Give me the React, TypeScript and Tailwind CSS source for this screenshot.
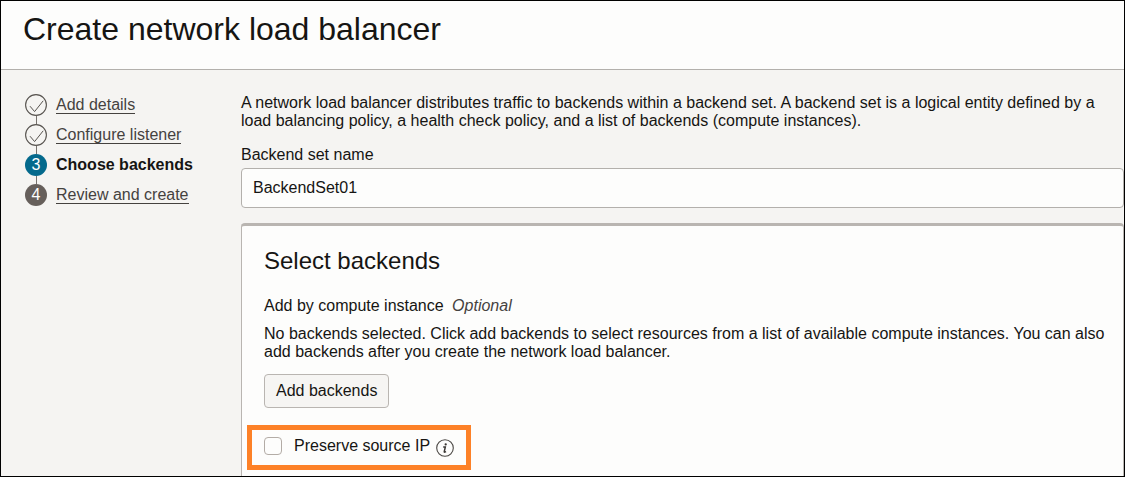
import { useState } from "react";

type Step = { label: string; state: "done" | "current" | "upcoming" };

const steps: Step[] = [
  { label: "Add details", state: "done" },
  { label: "Configure listener", state: "done" },
  { label: "Choose backends", state: "current" },
  { label: "Review and create", state: "upcoming" },
];

function CheckCircle() {
  return (
    <svg viewBox="0 0 22 22" className="size-[22px] shrink-0" fill="none" stroke="#57534f" aria-hidden="true">
      <circle cx="11" cy="11" r="10.4" strokeWidth="1.1" />
      <path d="M5 12.2 9.6 17.6 18.2 6.8" strokeWidth="1" />
    </svg>
  );
}

function StepMarker({ step, index }: { step: Step; index: number }) {
  if (step.state === "done") return <CheckCircle />;
  const tone = step.state === "current" ? "bg-[#04698c]" : "bg-[#665f5b]";
  return (
    <span className={`flex size-[22px] shrink-0 items-center justify-center rounded-full text-white ${tone}`}>
      {index + 1}
    </span>
  );
}

function Steps() {
  return (
    <nav aria-label="Steps" className="w-[216px] shrink-0">
      <ol>
        {steps.map((step, i) => (
          <li key={step.label}>
            <div className="flex items-center gap-[9px]">
              <StepMarker step={step} index={i} />
              {step.state === "current" ? (
                <span aria-current="step" className="font-bold text-[#161513]">{step.label}</span>
              ) : (
                <a href="#" className="border-b border-[#45423f] leading-[17px] text-[#45423f]">{step.label}</a>
              )}
            </div>
            {i < steps.length - 1 && <div className="ml-[11px] h-2 w-px bg-[#77726e]" />}
          </li>
        ))}
      </ol>
    </nav>
  );
}

function InfoIcon() {
  return (
    <svg viewBox="0 0 18 18" className="size-[18px]" fill="none" aria-hidden="true">
      <circle cx="9" cy="9" r="8.3" stroke="#4a4744" strokeWidth="1.1" />
      <circle cx="9.7" cy="5.4" r="1.15" fill="#3a3734" />
      <path d="M7.2 8.1H9.3L8.3 12.3q-.2 1 .5.8l1.3-.5" stroke="#3a3734" strokeWidth="1.5" />
    </svg>
  );
}

export default function App() {
  const [name, setName] = useState("BackendSet01");
  const [preserve, setPreserve] = useState(false);

  return (
    <div className="flex min-h-screen flex-col border border-black bg-[#f5f4f2] font-['Liberation_Sans',Arial,sans-serif] text-base leading-[18px] text-[#161513]">
      <header className="border-b border-[#b3b0ac] bg-[#fdfdfc] px-[22px] pt-2 pb-5">
        <h1 className="text-[32px] leading-10">Create network load balancer</h1>
      </header>
      <div className="flex flex-1 pt-6 pl-6">
        <Steps />
        <main className="flex min-w-0 flex-1 flex-col">
          <p>
            A network load balancer distributes traffic to backends within a backend set. A backend set is a logical
            entity defined by a load balancing policy, a health check policy, and a list of backends (compute instances).
          </p>
          <label htmlFor="backend-set" className="mt-4">Backend set name</label>
          <input
            id="backend-set"
            type="text"
            value={name}
            onChange={(e) => setName(e.target.value)}
            className="mt-1 h-10 w-full rounded border border-[#b3b0ac] bg-[#fdfdfc] px-[11px]"
          />
          <section className="mt-[15px] flex-1 rounded-t border border-t-[3px] border-b-0 border-[#b9b5b1] bg-[#fdfdfc] pt-[19px] pr-3 pb-1.5 pl-[22px]">
            <h2 className="text-2xl leading-8">Select backends</h2>
            <h3 className="mt-5">
              Add by compute instance <em className="ml-1 text-[#45423f]">Optional</em>
            </h3>
            <p className="mt-2.5">
              No backends selected. Click add backends to select resources from a list of available compute instances.
              You can also add backends after you create the network load balancer.
            </p>
            <button
              type="button"
              className="mt-[13px] h-[34px] rounded border border-[#b9b5b1] bg-[#f6f5f3] px-[11px]"
            >
              Add backends
            </button>
            <div className="mt-[17px] -ml-[17px] flex h-[45px] w-fit items-center border-[5px] border-[#fd8127] pr-3 pb-1 pl-3">
              <input
                id="preserve-ip"
                type="checkbox"
                checked={preserve}
                onChange={(e) => setPreserve(e.target.checked)}
                className="size-[18px] appearance-none rounded border border-[#b3aca6] bg-[#fdfdfc] checked:bg-[#04698c]"
              />
              <label htmlFor="preserve-ip" className="ml-3">Preserve source IP</label>
              <button type="button" aria-label="About preserving the source IP" className="mt-1 ml-1.5">
                <InfoIcon />
              </button>
            </div>
          </section>
        </main>
      </div>
    </div>
  );
}
